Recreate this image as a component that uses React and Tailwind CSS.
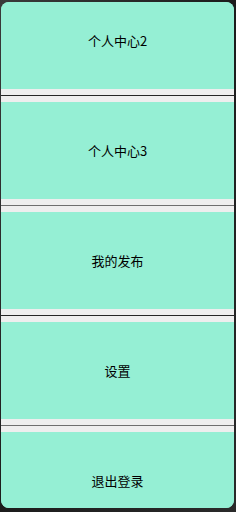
import React from 'react';

const items = [
  { label: '个人中心2', line: 'bg-[#262626]' },
  { label: '个人中心3', line: 'bg-[#6e6e6e]' },
  { label: '我的发布', line: 'bg-[#262626]' },
  { label: '设置', line: 'bg-[#6e6e6e]' },
  { label: '退出登录', line: null },
];

export default function App() {
  return (
    <div className="w-[236px] h-[512px] bg-gradient-to-br from-[#3a3a3a] via-[#1c1c1c] to-[#2a2a2a] pt-[2px] pl-[1px] pr-[2px] pb-[4px] font-['Noto_Sans_CJK_SC',sans-serif]">
      <div className="h-full rounded-[8px] overflow-hidden bg-[#95efd4]">
        <div className="-mt-[10px] flex flex-col">
          {items.map((it, i) => (
            <div key={i}>
              <div className="h-[97px] flex items-center justify-center bg-[#95efd4] text-[13px] text-black">
                {it.label}
              </div>
              {it.line && (
                <div className="bg-[#eeeeee] pt-[6px] pb-[6px]">
                  <div className={`h-[1px] ${it.line}`} />
                </div>
              )}
            </div>
          ))}
        </div>
      </div>
    </div>
  );
}
